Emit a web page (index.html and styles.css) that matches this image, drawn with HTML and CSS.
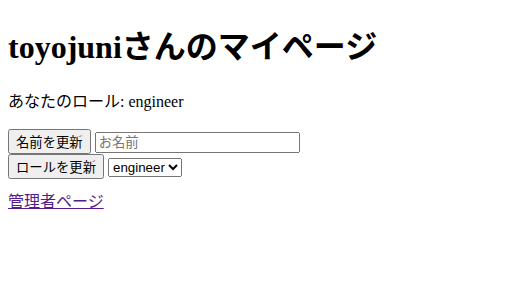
FILE: index.html
```html
<!DOCTYPE html>
<html lang="ja">
<head>
<meta charset="utf-8">
<title>マイページ</title>
<link rel="stylesheet" href="styles.css">
</head>
<body class="page">
<h1 class="title">toyojuniさんのマイページ</h1>
<p class="role">あなたのロール: engineer</p>
<form class="form">
<button type="button" class="btn">名前を更新</button>
<input type="text" class="name-input" placeholder="お名前"><br>
<button type="button" class="btn">ロールを更新</button>
<select class="role-select"><option>engineer</option><option>admin</option></select>
</form>
<p class="links"><a class="admin-link" href="#">管理者ページ</a></p>
</body>
</html>
```
FILE: styles.css
```css
.page {
  margin: 8px;
  font-family: "Liberation Serif", "Noto Sans CJK JP", serif;
  font-size: 16px;
  line-height: 22px;
  color: #000;
  background: #fff;
}
.title {
  font-size: 2em;
  line-height: 36px;
  margin: 21px 0 26px;
  font-weight: bold;
}
.role {
  margin: 1em 0;
}
.form {
  margin: 0;
}
.btn,
.name-input,
.role-select {
  font-family: "Liberation Sans", "Noto Sans CJK JP", sans-serif;
  font-size: 13.333px;
}
.name-input {
  width: 205px;
  box-sizing: border-box;
}
.links {
  margin: 12px 0 1em;
}
.admin-link {
  color: #551a8b;
}
```
